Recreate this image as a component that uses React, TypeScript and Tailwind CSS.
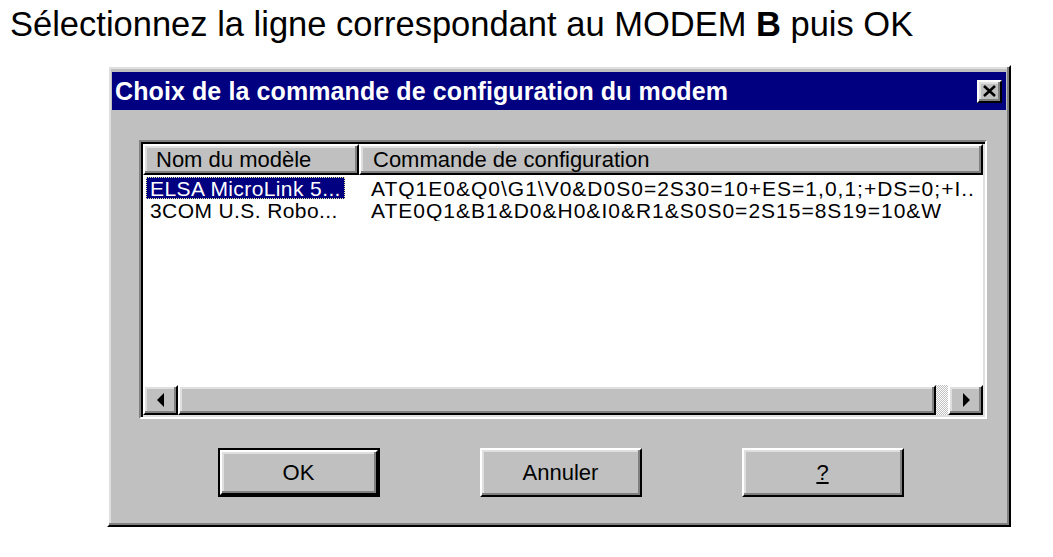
import React from 'react';

const raised =
  'border-2 border-t-white border-l-white border-r-black border-b-black shadow-[inset_-2px_-2px_0_#808080,inset_2px_2px_0_#dfdfdf]';

function Arrow({ dir }: { dir: 'left' | 'right' }) {
  return (
    <svg width="8" height="14" viewBox="0 0 8 14">
      {dir === 'left' ? <polygon points="7,0 7,14 0,7" fill="#000" /> : <polygon points="1,0 1,14 8,7" fill="#000" />}
    </svg>
  );
}

export default function App() {
  const rows = [
    { name: 'ELSA MicroLink 5...', cmd: 'ATQ1E0&Q0\\G1\\V0&D0S0=2S30=10+ES=1,0,1;+DS=0;+I..', selected: true },
    { name: '3COM U.S. Robo...', cmd: 'ATE0Q1&B1&D0&H0&I0&R1&S0S0=2S15=8S19=10&W', selected: false },
  ];

  return (
    <div className="w-[1053px] h-[557px] bg-white overflow-hidden font-['Liberation_Sans',Arial,sans-serif] text-black">
      {/* Instruction */}
      <div className="h-[65px] pl-[10px] pt-[4px] text-[34.5px] leading-[40px] whitespace-nowrap">
        Sélectionnez la ligne correspondant au MODEM <b>B</b> puis OK
      </div>

      {/* Dialog */}
      <div className={`ml-[107px] w-[904px] h-[462px] bg-[#c0c0c0] ${raised} px-[3px] pt-[5px] flex flex-col`}>
        {/* Title bar */}
        <div className="h-[38px] bg-[#000080] flex items-center justify-between pl-[3px] pr-[4px]">
          <span className="text-white font-bold text-[25px] leading-none tracking-[0.1px]">
            Choix de la commande de configuration du modem
          </span>
          <button className={`w-[25px] h-[23px] bg-[#c0c0c0] ${raised} flex items-center justify-center`}>
            <svg width="13" height="12" viewBox="0 0 13 12">
              <path d="M1 1 L12 11 M12 1 L1 11" stroke="#000" strokeWidth="2.6" />
            </svg>
          </button>
        </div>

        {/* List view */}
        <div className="mt-[30px] ml-[27px] w-[848px] h-[279px] border-2 border-t-[#808080] border-l-[#808080] border-r-white border-b-white shadow-[inset_2px_2px_0_#000,inset_-2px_-2px_0_#dfdfdf] p-[2px] bg-white flex flex-col">
          {/* Header */}
          <div className="flex h-[31px] text-[22px] leading-none">
            <div className={`w-[216px] bg-[#c0c0c0] ${raised} flex items-center pl-[11px]`}>Nom du modèle</div>
            <div className={`flex-1 bg-[#c0c0c0] ${raised} flex items-center pl-[12px]`}>Commande de configuration</div>
          </div>
          {/* Rows */}
          <div className="flex-1 text-[21px] leading-[21px] pt-[2px]">
            {rows.map((r) => (
              <div key={r.name} className="flex h-[22px] items-center">
                <div className="w-[216px] pl-[3px] flex items-center h-full">
                  <span
                    className={
                      r.selected
                        ? 'bg-[#000080] text-white h-full flex items-center px-[3px] border border-dotted border-[#e8e8a0] tracking-[0.4px]'
                        : 'px-[4px] tracking-[0.4px]'
                    }
                  >
                    {r.name}
                  </span>
                </div>
                <div className="flex-1 pl-[12px] whitespace-nowrap overflow-hidden tracking-[1px]">{r.cmd}</div>
              </div>
            ))}
          </div>
          {/* Horizontal scrollbar */}
          <div className="h-[30px] flex bg-[#c0c0c0]">
            <div className={`w-[35px] h-full bg-[#c0c0c0] ${raised} flex items-center justify-center`}>
              <Arrow dir="left" />
            </div>
            <div className={`w-[758px] h-full bg-[#c0c0c0] ${raised}`} />
            <div className="flex-1 h-full bg-[repeating-conic-gradient(#ffffff_0%_25%,#c0c0c0_0%_50%)] bg-[length:2px_2px]" />
            <div className={`w-[35px] h-full bg-[#c0c0c0] ${raised} flex items-center justify-center`}>
              <Arrow dir="right" />
            </div>
          </div>
        </div>

        {/* Buttons */}
        <div className="mt-[29px] flex justify-center gap-[100px] pl-[3px] text-[22px] leading-none">
          <div className="w-[162px] h-[49px] border-2 border-black">
            <button className={`w-full h-full bg-[#c0c0c0] ${raised}`}>OK</button>
          </div>
          <button className={`w-[162px] h-[49px] bg-[#c0c0c0] ${raised}`}>Annuler</button>
          <button className={`w-[162px] h-[49px] bg-[#c0c0c0] ${raised}`}>
            <span className="underline">?</span>
          </button>
        </div>
      </div>
    </div>
  );
}
